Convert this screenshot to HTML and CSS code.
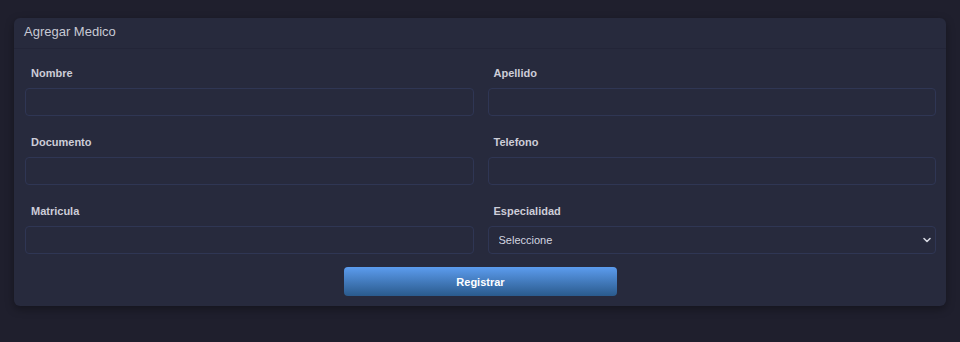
FILE: index.html
```html
<!DOCTYPE html>
<html lang="es">
<head>
    <meta charset="UTF-8">
    <meta name="viewport" content="width=device-width, initial-scale=1.0">
    <title>Agregar Medico</title>
    <link rel="stylesheet" href="styles.css">
</head>
<body>
    <main class="page">
        <div class="card">
            <div class="card-header">Agregar Medico</div>
            <form class="card-body" id="medicoForm">
                <div class="form-grid">
                    <div class="form-group">
                        <label for="nombre">Nombre</label>
                        <input type="text" id="nombre" name="nombre">
                    </div>
                    <div class="form-group">
                        <label for="apellido">Apellido</label>
                        <input type="text" id="apellido" name="apellido">
                    </div>
                    <div class="form-group">
                        <label for="documento">Documento</label>
                        <input type="text" id="documento" name="documento">
                    </div>
                    <div class="form-group">
                        <label for="telefono">Telefono</label>
                        <input type="text" id="telefono" name="telefono">
                    </div>
                    <div class="form-group">
                        <label for="matricula">Matricula</label>
                        <input type="text" id="matricula" name="matricula">
                    </div>
                    <div class="form-group">
                        <label for="especialidad">Especialidad</label>
                        <div class="select-wrap">
                            <select id="especialidad" name="especialidad">
                                <option>Seleccione</option>
                            </select>
                            <svg class="chevron" width="10" height="10" viewBox="0 0 10 10">
                                <path d="M2 3.5 L5 6.5 L8 3.5" fill="none" stroke="#d4d6e0" stroke-width="1.6" stroke-linecap="round" stroke-linejoin="round"/>
                            </svg>
                        </div>
                    </div>
                </div>
                <button type="submit">Registrar</button>
            </form>
        </div>
    </main>
</body>
</html>
```

FILE: styles.css
```css
body {
  font-family: "Liberation Sans", Arial, sans-serif;
  margin: 0;
  padding: 0;
  background-color: #1f1f2d;
  color: #c9cad6;
}
.page {
  padding: 18px 14px 36px;
}
/* Card */
.card {
  background-color: #272a3d;
  border-radius: 6px;
  box-shadow: 0 3px 8px rgba(0, 0, 0, 0.35);
}
.card-header {
  height: 30px;
  line-height: 28px;
  padding: 0 10px;
  font-size: 13px;
  color: #c8c9d4;
  border-bottom: 1px solid #232538;
}
.card-body {
  padding: 18px 10px 10px 11px;
  display: flex;
  flex-direction: column;
  align-items: center;
}
.form-grid {
  align-self: stretch;
  display: grid;
  grid-template-columns: 1fr 1fr;
  column-gap: 14px;
  row-gap: 20px;
}
.form-group label {
  display: block;
  padding: 0 6px;
  margin-bottom: 8px;
  font-size: 11px;
  line-height: 13px;
  font-weight: bold;
  color: #cdcdd8;
}
.form-group input,
.form-group select {
  display: block;
  width: 100%;
  box-sizing: border-box;
  height: 28px;
  padding: 0 10px;
  background-color: #272a3d;
  border: 1px solid #2f3654;
  border-radius: 4px;
  color: #d4d6e0;
  font-family: inherit;
  font-size: 11px;
  outline: none;
}
.select-wrap {
  position: relative;
}
.form-group select {
  appearance: none;
  -webkit-appearance: none;
}
.chevron {
  position: absolute;
  right: 4px;
  top: 9px;
}
button {
  margin-top: 13px;
  width: 273px;
  height: 29px;
  border: none;
  border-radius: 4px;
  background: linear-gradient(#5c9cee, #2a5a8c);
  color: #fff;
  font-family: inherit;
  font-size: 11px;
  font-weight: bold;
  cursor: pointer;
}
button:hover {
  background: linear-gradient(#4f8fe0, #244f7c);
}
```
